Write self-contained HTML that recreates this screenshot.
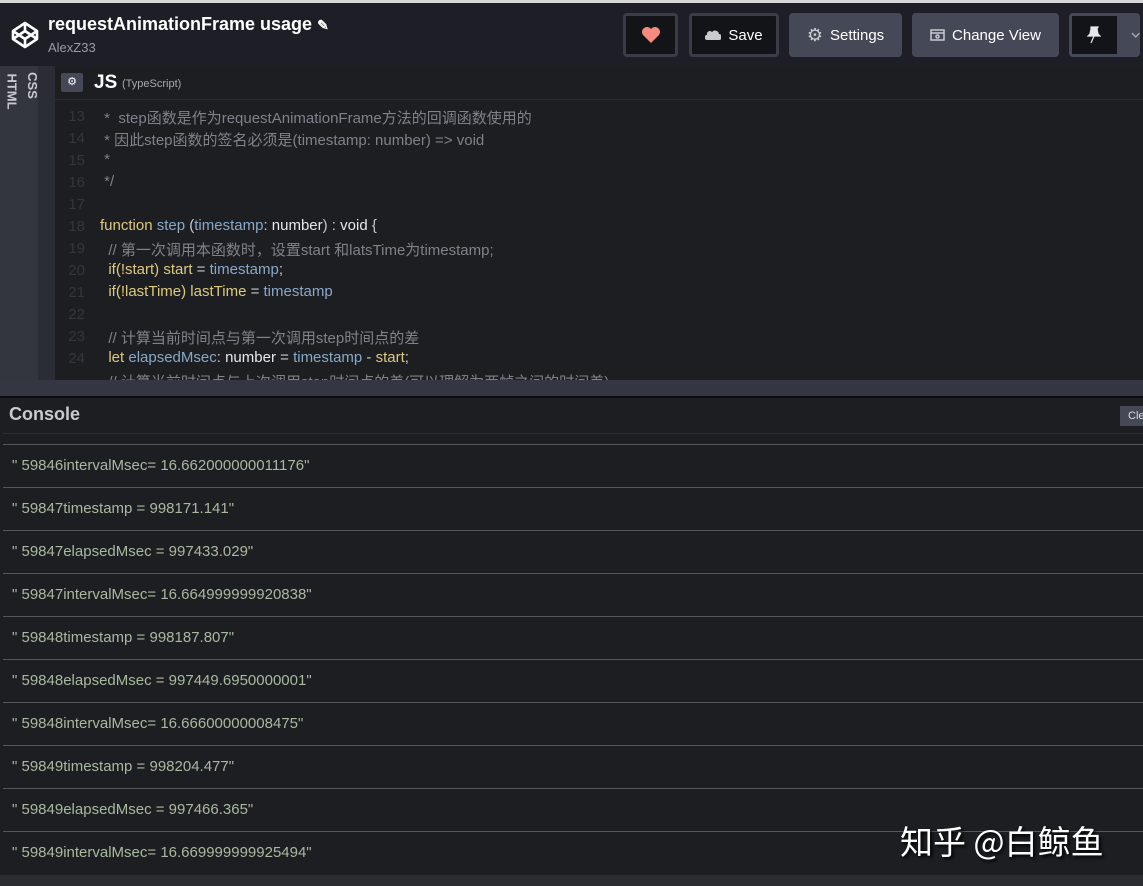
<!DOCTYPE html>
<html><head><meta charset="utf-8"><style>
*{margin:0;padding:0;box-sizing:border-box}
body{width:1143px;height:886px;overflow:hidden;background:#1d1e22;font-family:"Liberation Sans","Noto Sans CJK SC",sans-serif;position:relative}
.top{position:absolute;left:0;top:0;width:1143px;height:3px;background:#d8d8d8}
.hdr{position:absolute;left:0;top:3px;width:1143px;height:63px;background:#1e1f26}
.title{position:absolute;left:48px;top:11px;color:#fff;font-size:18px;font-weight:bold}
.user{position:absolute;left:48px;top:37px;color:#9a9ba3;font-size:13px}
.btn{position:absolute;top:13px;height:44px;border-radius:4px;color:#fff;font-size:15px;display:flex;align-items:center;justify-content:center;gap:7px}
.dark{background:#131417;border:3px solid #3a3c47}
.gray{background:#444857}
.tabs{position:absolute;left:0;top:66px;width:55px;height:314px;background:#2b2d36}
.tab{position:absolute;top:0;height:314px;background:#33353f;color:#c9cad0;font-size:13px;font-weight:bold}
.jsh{position:absolute;left:55px;top:66px;width:1088px;height:34px;background:#1d1e22;border-bottom:1px solid #2a2c33}
.code{position:absolute;left:55px;top:100px;width:1088px;height:280px;background:#1d1e22;overflow:hidden;font-size:15px}
.ln{position:absolute;left:10px;width:20px;text-align:right;color:#34363f}
.tx{position:absolute;left:45px;white-space:pre;color:#c8c9cd}
.c{color:#80818a}.k{color:#ddca7e}.v{color:#88a8c8}.w{color:#e8e8ea}
.bar{position:absolute;left:0;top:380px;width:1143px;height:18px;background:#343642;border-bottom:2px solid #0c0c0e}
.con{position:absolute;left:3px;top:400px;width:1140px;height:475px;background:#1d1e22}
.row{position:absolute;left:0;width:1140px;height:43px;border-top:1px solid #55575e;color:#a9b9a0;font-size:15px;padding:12px 0 0 9px}
.foot{position:absolute;left:0;top:875px;width:1143px;height:11px;background:#2b2c31}
</style></head><body>
<div class="top"></div>
<div class="hdr">
<svg style="position:absolute;left:10px;top:17px" width="30" height="30" viewBox="0 0 30 30" fill="none" stroke="#fff" stroke-width="2.6" stroke-linejoin="round"><path d="M15 3L27 11V19L15 27L3 19V11Z M15 3V11 M15 19V27 M3 11L15 19L27 11 M3 19L15 11L27 19"/></svg>
<div class="title">requestAnimationFrame usage <span style="font-size:14px">✎</span></div>
<div class="user">AlexZ33</div>
</div>
<div class="btn dark" style="left:623px;width:55px"><svg width="20" height="18" viewBox="0 0 20 18"><path d="M10 17L2 9a4.8 4.8 0 0 1 8-6a4.8 4.8 0 0 1 8 6z" fill="#f58a7f"/></svg></div>
<div class="btn dark" style="left:689px;width:90px"><svg width="16" height="10" viewBox="0 0 16 10"><path d="M2 10h12a3 3 0 0 0 0-6a4 4 0 0 0-7-2a3 3 0 0 0-5 3a2.5 2.5 0 0 0 0 5z" fill="#c9cad0"/></svg>Save</div>
<div class="btn gray" style="left:789px;width:113px"><span style="color:#c9cad0;font-size:18px">⚙</span>Settings</div>
<div class="btn gray" style="left:912px;width:147px"><svg width="15" height="12" viewBox="0 0 15 12" fill="none" stroke="#c9cad0" stroke-width="1.5"><rect x="1" y="1" width="13" height="10"/><line x1="1" y1="4" x2="14" y2="4"/><circle cx="7.5" cy="7.5" r="1.5"/></svg>Change View</div>
<div class="btn gray" style="left:1069px;width:71px;justify-content:flex-start"><div style="width:47px;height:38px;margin-left:3px;background:#131417;display:flex;align-items:center;justify-content:center"><svg width="14" height="18" viewBox="0 0 14 18"><path d="M4 1h7l-1 2 1 5 2 2H1l2-2 1-5z M7 10L4 17" fill="#e8e8ea" stroke="#e8e8ea" stroke-width="1.2"/></svg></div><svg style="margin-left:7px" width="10" height="6" viewBox="0 0 10 6"><path d="M1 1l4 4 4-4" fill="none" stroke="#aaa" stroke-width="1.5"/></svg></div>
<div class="tabs">
<div class="tab" style="left:0;width:20px"><div style="transform:rotate(90deg);position:absolute;left:-6px;top:18px">HTML</div></div>
<div class="tab" style="left:20px;width:18px"><div style="transform:rotate(90deg);position:absolute;left:-1px;top:12px">CSS</div></div>
</div>
<div class="jsh"><div style="position:absolute;left:6px;top:7px;width:22px;height:19px;background:#444857;border-radius:2px;color:#fff;font-size:11px;text-align:center;line-height:19px">⚙</div><span style="position:absolute;left:39px;top:6px;color:#fff;font-size:19px;font-weight:bold">JS</span><span style="position:absolute;left:67px;top:12px;color:#aaa;font-size:11px">(TypeScript)</span></div>
<div class="code">
<div class="ln" style="top:8px">13</div><div class="tx c" style="top:7px"> *  step函数是作为requestAnimationFrame方法的回调函数使用的</div>
<div class="ln" style="top:30px">14</div><div class="tx c" style="top:29px"> * 因此step函数的签名必须是(timestamp: number) => void</div>
<div class="ln" style="top:52px">15</div><div class="tx c" style="top:51px"> *</div>
<div class="ln" style="top:74px">16</div><div class="tx c" style="top:73px"> */</div>
<div class="ln" style="top:96px">17</div>
<div class="ln" style="top:118px">18</div><div class="tx" style="top:117px"><span class="k">function</span> <span class="v">step</span> (<span class="v">timestamp</span>: <span class="w">number</span>) : <span class="w">void</span> {</div>
<div class="ln" style="top:140px">19</div><div class="tx c" style="top:139px">  // 第一次调用本函数时，设置start 和latsTime为timestamp;</div>
<div class="ln" style="top:162px">20</div><div class="tx" style="top:161px">  <span class="k">if(!start) start</span> = <span class="v">timestamp</span>;</div>
<div class="ln" style="top:184px">21</div><div class="tx" style="top:183px">  <span class="k">if(!lastTime) lastTime</span> = <span class="v">timestamp</span></div>
<div class="ln" style="top:206px">22</div>
<div class="ln" style="top:228px">23</div><div class="tx c" style="top:227px">  // 计算当前时间点与第一次调用step时间点的差</div>
<div class="ln" style="top:250px">24</div><div class="tx" style="top:249px">  <span class="k">let</span> <span class="v">elapsedMsec</span>: <span class="w">number</span> = <span class="v">timestamp</span> - <span class="k">start</span>;</div>
<div class="tx c" style="top:271px">  // 计算当前时间点与上次调用step时间点的差(可以理解为两帧之间的时间差)</div>
</div>
<div class="bar"></div>
<div class="con">
<div style="position:absolute;left:6px;top:4px;color:#c9cad0;font-size:18px;font-weight:bold">Console</div>
<div style="position:absolute;left:1117px;top:6px;width:30px;height:20px;background:#444857;color:#ddd;font-size:11px;padding:4px 0 0 8px">Cle</div>
<div style="position:absolute;left:0;top:33px;width:1140px;height:1px;background:#2a2c33"></div>
<div class="row" style="top:44px">" 59846intervalMsec= 16.662000000011176"</div>
<div class="row" style="top:87px">" 59847timestamp = 998171.141"</div>
<div class="row" style="top:130px">" 59847elapsedMsec = 997433.029"</div>
<div class="row" style="top:173px">" 59847intervalMsec= 16.664999999920838"</div>
<div class="row" style="top:216px">" 59848timestamp = 998187.807"</div>
<div class="row" style="top:259px">" 59848elapsedMsec = 997449.6950000001"</div>
<div class="row" style="top:302px">" 59848intervalMsec= 16.66600000008475"</div>
<div class="row" style="top:345px">" 59849timestamp = 998204.477"</div>
<div class="row" style="top:388px">" 59849elapsedMsec = 997466.365"</div>
<div class="row" style="top:431px">" 59849intervalMsec= 16.669999999925494"</div>
</div>
<div style="position:absolute;left:900px;top:816px;color:#fff;font-size:33px;text-shadow:2px 2px 3px #000;font-family:'Noto Sans CJK SC',sans-serif">知乎 @白鲸鱼</div>
<div class="foot"></div>
</body></html>
